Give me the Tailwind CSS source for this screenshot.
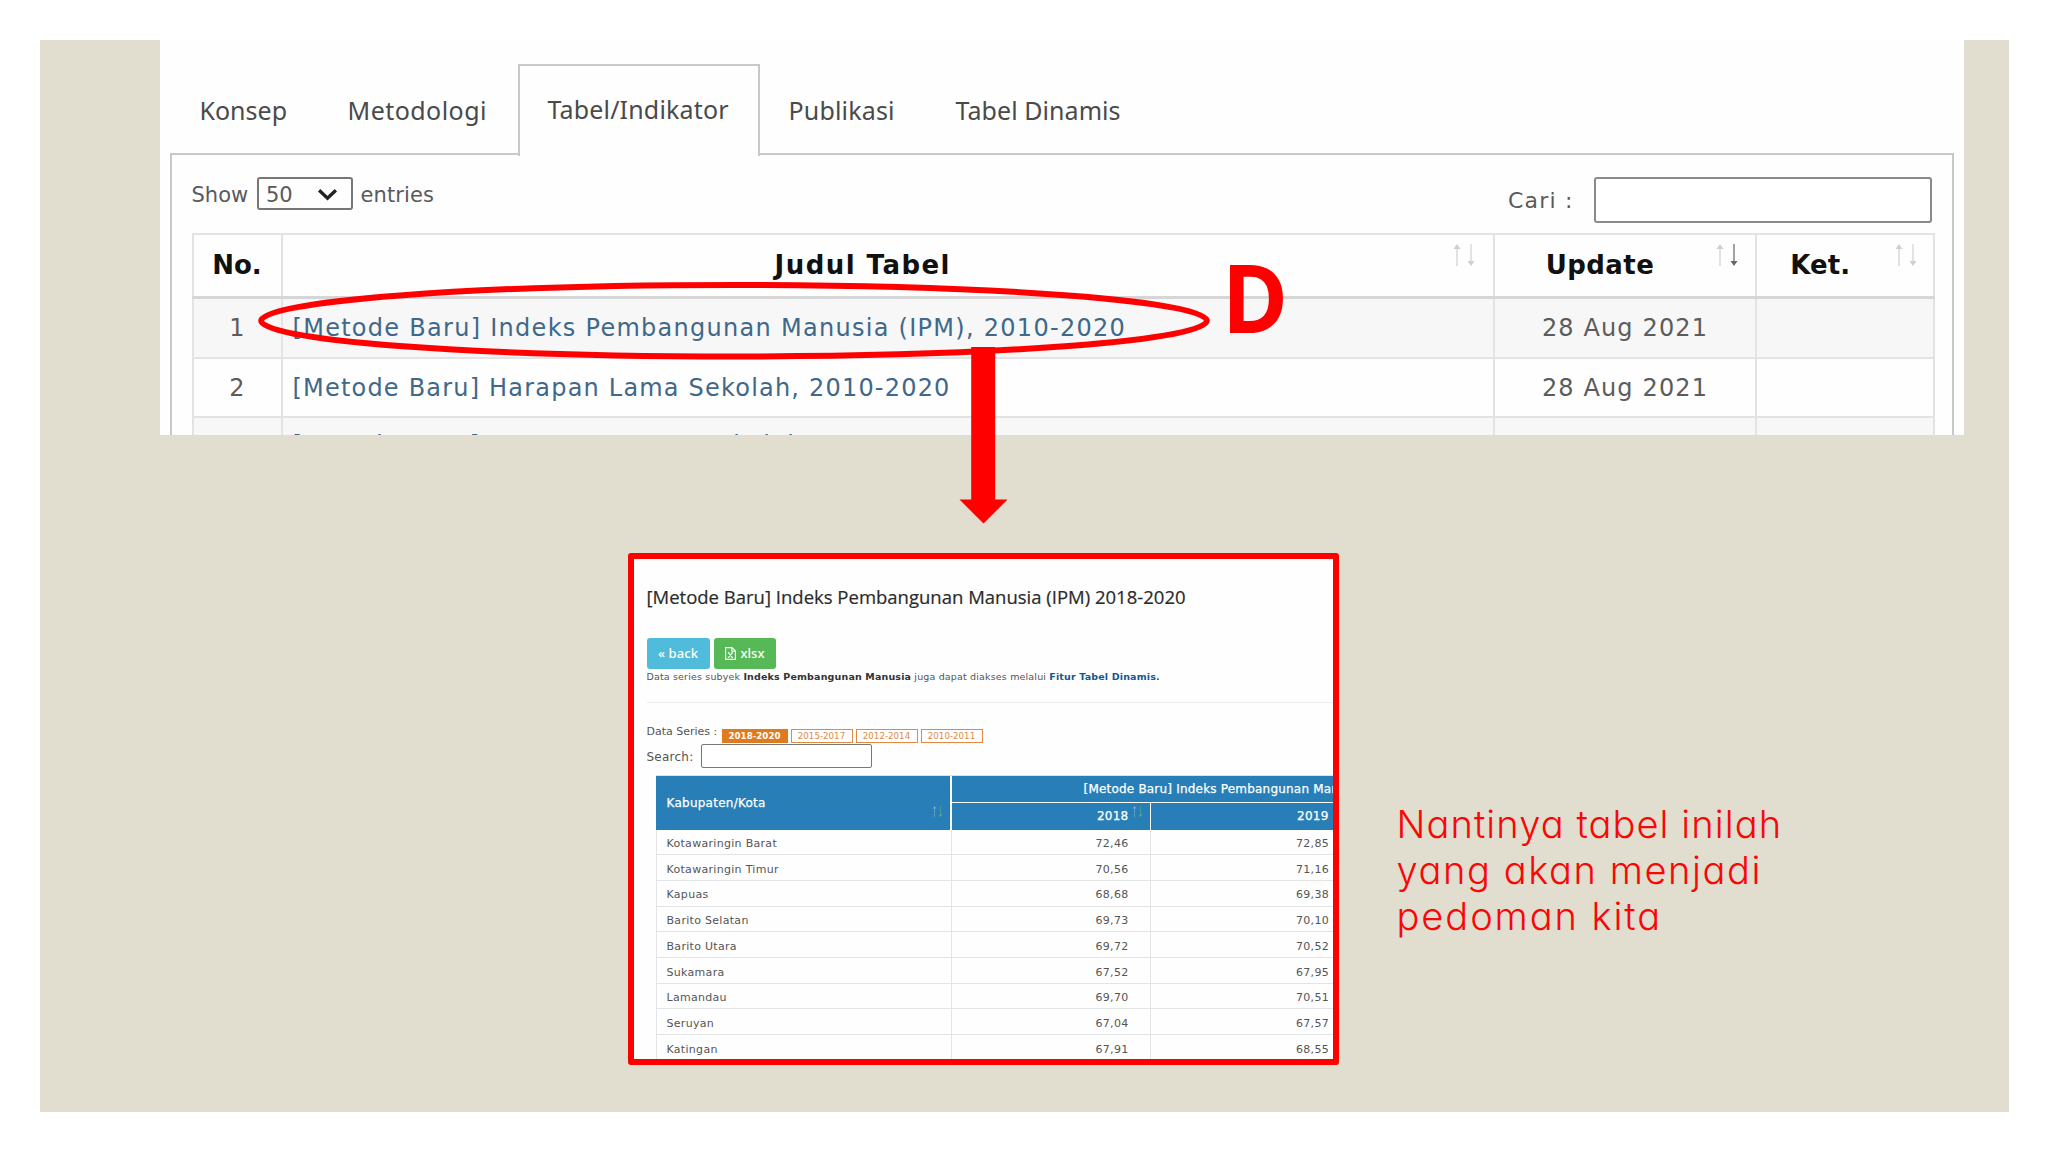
<!DOCTYPE html>
<html lang="id">
<head>
<meta charset="utf-8">
<title>Tabel/Indikator</title>
<script src="https://cdn.jsdelivr.net/npm/@tailwindcss/browser@4"></script>
</head>
<body class="bg-white w-[2048px] h-[1152px] overflow-hidden relative font-['DejaVu_Sans',sans-serif] whitespace-nowrap">
<svg width="0" height="0" class="absolute">
  <symbol id="up" viewBox="0 0 8 22"><path d="M4 2V22" stroke="currentColor" stroke-width="1.2"/><path d="M4 0L7.5 5H.5Z" fill="currentColor"/></symbol>
  <symbol id="down" viewBox="0 0 8 22"><path d="M4 0V20" stroke="currentColor" stroke-width="1.2"/><path d="M4 22L7.5 17H.5Z" fill="currentColor"/></symbol>
</svg>
<main class="absolute left-[39.5px] top-10 w-[1969px] h-[1071.5px] bg-[#e1decf]">

  <!-- index table -->
  <section class="absolute left-[120px] top-0 w-[1804.5px] h-[395px] bg-[#fefefe] overflow-hidden pt-6 pl-[10px] pr-[10.5px]">
    <nav class="flex h-[91px] relative z-10 text-[25px] leading-[34px] text-[#4a4a4a] font-['Noto_Sans',sans-serif]">
      <div class="pl-[30px] w-[178px] pt-[29px]">Konsep</div>
      <div class="w-[170px] pt-[29px] tracking-[0.46px]">Metodologi</div>
      <div class="w-[242px] h-[92px] border-2 border-b-0 border-[#c8c8ca] bg-[#fefefe] pl-[28px] pt-[26px] tracking-[0.16px]">Tabel/Indikator</div>
      <div class="w-[196px] pl-[29px] pt-[29px] tracking-[0.17px]">Publikasi</div>
      <div class="pt-[29px] tracking-[0.06px]">Tabel Dinamis</div>
    </nav>
    <div class="border-2 border-[#c8c8ca] -mt-[2px] h-[340px] px-[20px] pt-[22px]">
      <div class="flex justify-between text-[#5a5a5a] text-[21px] h-[56px]">
        <div class="flex h-[33px] items-center">
          <span class="w-[57px] pt-[4px]">Show</span>
          <span class="ml-[8.5px] w-[95.5px] h-[33px] rounded-[3px] border-2 border-[#777] flex items-center justify-between pl-[7px] pr-[13px]"><span class="pt-[4px]">50</span>
            <svg class="w-[21px] h-[13px] mt-px" viewBox="0 0 22 14" fill="none" stroke="#222" stroke-width="3.6"><path d="M2 2.5L11 11L20 2.5"/></svg></span>
          <span class="ml-[8px] pt-[4px] tracking-[0.1px]">entries</span>
        </div>
        <div class="flex h-[45px] items-center">
          <span class="text-[22px] tracking-[1.2px] pt-[2px]">Cari :</span>
          <span class="ml-[20px] w-[338px] h-[46px] rounded-[3px] border-2 border-[#8a8a8a] bg-white"></span>
        </div>
      </div>
      <table class="table-fixed w-[1743px] border-collapse text-center text-[24px] text-[#5c5c5c]">
        <colgroup><col class="w-[89px]"><col class="w-[1212.5px]"><col class="w-[262px]"><col></colgroup>
        <thead class="text-[26px] text-[#111]">
          <tr class="h-[63px]">
            <th class="border-2 border-b-3 border-[#e3e3e5] border-b-[#d6d6d6] pt-px">No.</th>
            <th class="border-2 border-b-3 border-[#e3e3e5] border-b-[#d6d6d6] relative pr-[50px] pt-px"><span class="tracking-[1.46px]">Judul Tabel</span>
              <span class="absolute right-[18px] top-[9px] flex gap-[6px] text-[#cfcfcf]"><svg class="w-2 h-[22px]"><use href="#up"/></svg><svg class="w-2 h-[22px]"><use href="#down"/></svg></span></th>
            <th class="border-2 border-b-3 border-[#e3e3e5] border-b-[#d6d6d6] relative pr-[50px] pt-px"><span class="tracking-[0.41px]">Update</span>
              <span class="absolute right-[17px] top-[9px] flex gap-[6px] text-[#cfcfcf]"><svg class="w-2 h-[22px]"><use href="#up"/></svg><svg class="w-2 h-[22px] text-[#666]"><use href="#down"/></svg></span></th>
            <th class="border-2 border-b-3 border-[#e3e3e5] border-b-[#d6d6d6] relative pr-[49px] pt-px"><span class="tracking-[0.12px]">Ket.</span>
              <span class="absolute right-[16px] top-[9px] flex gap-[6px] text-[#cfcfcf]"><svg class="w-2 h-[22px]"><use href="#up"/></svg><svg class="w-2 h-[22px]"><use href="#down"/></svg></span></th>
          </tr>
        </thead>
        <tbody>
          <tr class="h-[61px] bg-[#f7f7f7]"><td class="border-2 border-[#e3e3e5] pt-px">1</td><td class="border-2 border-[#e3e3e5] text-left pl-[10px] pt-px text-[#40688a] tracking-[1.28px]">[Metode Baru] Indeks Pembangunan Manusia (IPM), 2010-2020</td><td class="border-2 border-[#e3e3e5] pt-px tracking-[1.13px]">28 Aug 2021</td><td class="border-2 border-[#e3e3e5]"></td></tr>
          <tr class="h-[59px]"><td class="border-2 border-[#e3e3e5]">2</td><td class="border-2 border-[#e3e3e5] text-left pl-[10px] text-[#40688a] tracking-[1.2px]">[Metode Baru] Harapan Lama Sekolah, 2010-2020</td><td class="border-2 border-[#e3e3e5] tracking-[1.13px]">28 Aug 2021</td><td class="border-2 border-[#e3e3e5]"></td></tr>
          <tr class="h-[56px] bg-[#f7f7f7]"><td class="border-2 border-[#e3e3e5]"></td><td class="border-2 border-[#e3e3e5] text-left pl-[10px] text-[#40688a] tracking-[1.2px]">[Metode Baru] Rata-rata Lama Sekolah, 2010-2020</td><td class="border-2 border-[#e3e3e5]"></td><td class="border-2 border-[#e3e3e5]"></td></tr>
        </tbody>
      </table>
    </div>
  </section>

  <!-- detail table -->
  <section class="absolute left-[588px] top-[512.5px] w-[711.5px] h-[512px] border-[6.5px] border-[#fe0000] rounded-[3px] bg-[#fefefe] overflow-hidden pl-[13px] pt-[24px] text-[#555]">
    <h1 class="text-[18.5px] leading-[27px] h-[55.5px] font-medium text-[#2b2b2b] font-['Open_Sans',sans-serif] [-webkit-text-stroke:0.2px]">[Metode Baru] Indeks Pembangunan Manusia (IPM) 2018-2020</h1>
    <div class="flex gap-1 h-[30.5px] text-white text-[13px] font-['Noto_Sans',sans-serif] font-medium">
      <span class="w-[63px] rounded-[3px] bg-[#50bbdb] flex items-center justify-center tracking-[0.1px]">« back</span>
      <span class="w-[62px] rounded-[3px] bg-[#57b857] flex items-center pl-[11px] gap-[5px]">
        <svg class="w-[11px] h-[13px]" viewBox="0 0 11 13" fill="none" stroke="#fff" stroke-width="1.1"><path d="M.6.6H7L10.4 4V12.4H.6ZM6.8.8V4.2H10.2M3.6 5.8L7.2 10.4M7.2 5.8L3.6 10.4M2.8 5.8H4.4M6.4 5.8H8M2.8 10.4H4.4M6.4 10.4H8"/></svg>
        xlsx</span>
    </div>
    <p class="text-[9.5px] leading-[13px] h-[34.5px] border-b border-[#ececec] pt-px tracking-[0.16px]">Data series subyek <b class="text-[#333]">Indeks Pembangunan Manusia</b> juga dapat diakses melalui <b class="text-[#14588f]">Fitur Tabel Dinamis.</b></p>
    <div class="flex mt-[21px] h-[20px] text-[11px] leading-[15px]">
      <span class="w-[75px]">Data Series :</span>
      <div class="flex gap-[3px] mt-[4.5px] text-[8.7px] text-[#e08a45]">
        <span class="w-[66px] h-[14.5px] leading-[15px] bg-[#df7a1e] text-white font-bold text-center">2018-2020</span>
        <span class="w-[62px] h-[14.5px] leading-[13px] border border-[#e08a45] text-center">2015-2017</span>
        <span class="w-[62px] h-[14.5px] leading-[13px] border border-[#e08a45] text-center">2012-2014</span>
        <span class="w-[62px] h-[14.5px] leading-[13px] border border-[#e08a45] text-center">2010-2011</span>
      </div>
    </div>
    <div class="flex items-center h-6 text-[12px]"><span class="w-[54px] tracking-[0.25px] pt-[2px]">Search:</span><span class="w-[171px] h-6 rounded-[2px] border border-[#777] bg-white"></span></div>
    <div class="ml-[9px] mt-[6.5px] grid grid-cols-[296px_199px_339px] grid-rows-[27px_27px] w-[834px] bg-[#287fb8] text-white text-[12px] tracking-[0.25px] border-t border-[#d5e5f0] [-webkit-text-stroke:0.25px]">
      <div class="row-span-2 border-r-2 border-white flex items-center pl-[11px] pr-[7px] justify-between">Kabupaten/Kota
        <span class="flex mt-[18px] gap-px"><svg class="w-[5px] h-[11px] text-[#79aed0]"><use href="#up"/></svg><svg class="w-[5px] h-[11px] text-[#5aa98a]"><use href="#down"/></svg></span></div>
      <div class="col-span-2 border-b border-white flex items-center pl-[132px] tracking-[0.2px]">[Metode Baru] Indeks Pembangunan Manusia</div>
      <div class="border-r border-white flex items-center justify-end pr-[7px] gap-[3px]">2018
        <span class="flex mb-[10px] gap-px"><svg class="w-[5px] h-[11px] text-[#79aed0]"><use href="#up"/></svg><svg class="w-[5px] h-[11px] text-[#5aa98a]"><use href="#down"/></svg></span></div>
      <div class="flex items-center pl-[146.5px]">2019</div>
    </div>
    <div id="rows" class="ml-[9px] w-[834px] text-[11px]"></div>
  </section>

  <p class="absolute left-[1357px] top-[760.5px] text-[38px] leading-[46.2px] font-light text-[#fb0505] font-[Inter,sans-serif] [font-feature-settings:'cv11']"><span class="tracking-[1.1px]">Nantinya tabel inilah</span><br><span class="tracking-[1.6px]">yang akan menjadi</span><br><span class="tracking-[1.95px]">pedoman kita</span></p>

  <!-- annotations -->
  <svg class="absolute left-0 top-0 w-[1969px] h-[500px]" viewBox="39.5 40 1969 500">
    <ellipse cx="733.5" cy="320.7" rx="472.8" ry="35.8" fill="none" stroke="#fe0000" stroke-width="6"/>
    <path d="M970.7 347H994.7V499.5H1007L983 523.5L959 499.5H970.7Z" fill="#fe0000"/>
  </svg>
  <span class="absolute left-[1182px] top-[199px] text-[95px] leading-[114px] font-bold text-[#fe0000] font-['Open_Sans',sans-serif] origin-left scale-x-[0.94]">D</span>
</main>
<script>
  const data = [["Kotawaringin Barat","72,46","72,85"],["Kotawaringin Timur","70,56","71,16"],["Kapuas","68,68","69,38"],["Barito Selatan","69,73","70,10"],["Barito Utara","69,72","70,52"],["Sukamara","67,52","67,95"],["Lamandau","69,70","70,51"],["Seruyan","67,04","67,57"],["Katingan","67,91","68,55"]];
  document.getElementById("rows").innerHTML = data.map(([name, y18, y19]) => `<div class="grid grid-cols-[295px_199px_340px] h-[25.7px] border-b border-l border-[#e2e4e6] tracking-[0.3px]"><span class="flex items-center pt-[5px] pl-[10px] border-r border-[#e2e4e6]">${name}</span><span class="flex items-center pt-[5px] justify-end pr-[21px] border-r border-[#e2e4e6]">${y18}</span><span class="flex items-center pt-[5px] pl-[145.5px]">${y19}</span></div>`).join("");
</script>
</body>
</html>
